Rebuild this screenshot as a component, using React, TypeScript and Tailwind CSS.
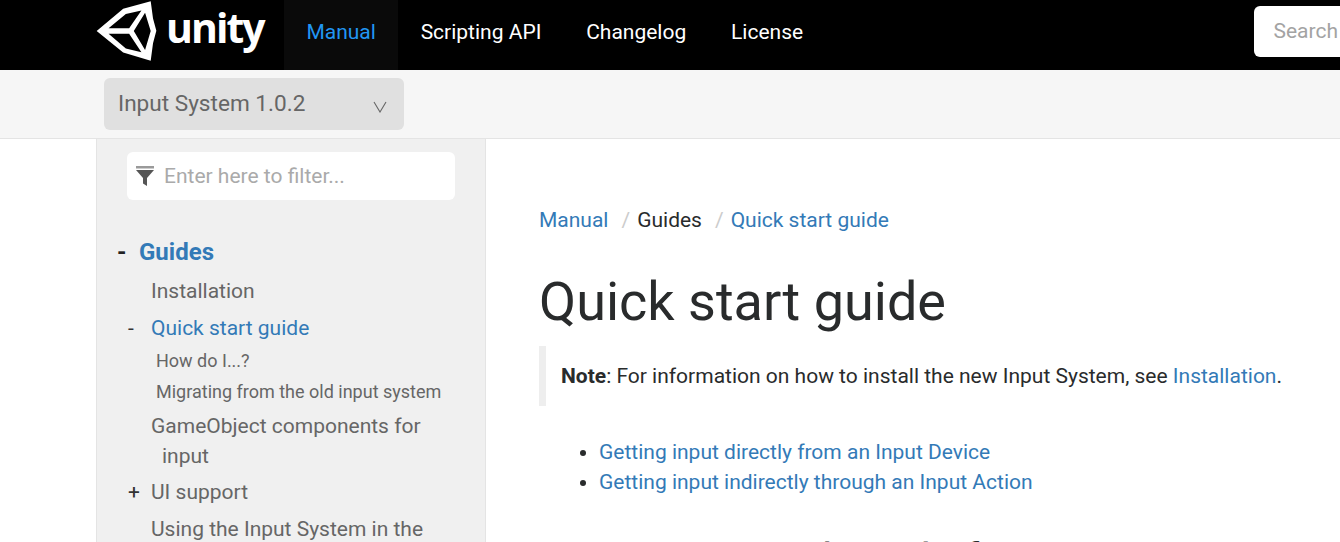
import React from 'react';

const font = "font-['Roboto','Liberation_Sans',sans-serif]";

const UnityMark = () => (
  <svg viewBox="18 0 187 186" className="w-[62px] h-[62px] shrink-0 mb-[8px]">
    <path
      fill="#fff"
      fillRule="evenodd"
      d="M20 93 L100 26 L183 3 L190 55 L200 92 L190 130 L183 183 L100 158 Z
         M56 85 L118 85 L155 31 L108 42 Z
         M56 101 L118 101 L155 157 L108 146 Z
         M166 38 L132 93 L166 150 L183 93 Z"
    />
  </svg>
);

const NavLink = ({ label, active }: { label: string; active?: boolean }) => (
  <a className={active ? 'h-full flex items-center px-[22.4px] pb-[5px] whitespace-nowrap bg-[#0a0a0a] text-[#2196f3]' : 'h-full flex items-center px-[22.4px] pb-[5px] whitespace-nowrap text-white'}>
    {label}
  </a>
);

export default function App() {
  return (
    <div className={`${font} w-[1340px] h-[542px] overflow-hidden bg-white text-[#292b2c]`}>
      <header className="h-[70px] bg-black flex overflow-hidden">
        <div className="w-[284px] pl-[96px] flex items-center gap-[8px] shrink-0">
          <UnityMark />
          <span className="text-white font-bold text-[41px] tracking-[-2px] leading-none mb-[16px] font-['Open_Sans',sans-serif]">unity</span>
        </div>
        <nav className="flex text-[21px] h-full">
          <NavLink label="Manual" active />
          <NavLink label="Scripting API" />
          <NavLink label="Changelog" />
          <NavLink label="License" />
        </nav>
        <div className="ml-[428px] mt-[6px] w-[200px] h-[51px] shrink-0 bg-white rounded-md pl-[20px] flex items-center text-[21px] text-[#a3a3a3]">
          Search
        </div>
      </header>

      <div className="h-[69px] bg-[#f6f6f6] border-b border-[#e4e4e4] pl-[104px] pt-[8px]">
        <div className="w-[300px] h-[52px] bg-[#e0e0e0] rounded-md pl-[14px] pr-[17px] flex items-center justify-between text-[#666] text-[22.6px]">
          <span>Input System 1.0.2</span>
          <svg viewBox="0 0 14 12" className="w-[14px] h-[12px] mt-[5px]" fill="none" stroke="#666" strokeWidth="1.1">
            <path d="M1 1 L7 11 L13 1" />
          </svg>
        </div>
      </div>

      <div className="flex">
        <aside className="ml-[96px] w-[390px] shrink-0 h-[403px] bg-[#f0f0f0] border-x border-[#e4e4e4] overflow-hidden">
          <div className="ml-[30px] mt-[13px] w-[328px] h-[48px] bg-white rounded-md flex items-center pl-[9px] gap-[10px] text-[21px] text-[#aaa]">
            <svg viewBox="0 0 18 22" className="w-[18px] h-[22px]">
              <path d="M0 1 H18 V3.5 H0 Z" fill="#9a9a9a" />
              <path d="M0 5 H18 L11 13 V21 L7 18.5 V13 Z" fill="#555" />
            </svg>
            <span className="pt-[2px]">Enter here to filter...</span>
          </div>

          <div className="mt-[37px] text-[#666]">
            <div className="flex items-center h-[30px] text-[24px] font-bold">
              <span className="w-[42px] pl-[20px] text-[#222]">-</span>
              <a className="text-[#337ab7]">Guides</a>
            </div>
            <div className="mt-[9px] ml-[54px] h-[30px] text-[21px] leading-[30px]">Installation</div>
            <div className="mt-[7px] h-[30px] text-[21px] leading-[30px] flex">
              <span className="w-[54px] pl-[31px] text-[#333]">-</span>
              <a className="text-[#337ab7]">Quick start guide</a>
            </div>
            <div className="mt-[2px] ml-[59px] text-[18px] leading-[31px]">How do I...?</div>
            <div className="ml-[59px] text-[18px] leading-[31px]">Migrating from the old input system</div>
            <div className="mt-[4px] ml-[54px] text-[21px] leading-[30px]">GameObject components for</div>
            <div className="ml-[65px] text-[21px] leading-[30px]">input</div>
            <div className="mt-[6px] h-[30px] text-[21px] leading-[30px] flex">
              <span className="w-[54px] pl-[31px] text-[#333]">+</span>
              <span>UI support</span>
            </div>
            <div className="mt-[7px] ml-[54px] text-[21px] leading-[30px]">Using the Input System in the</div>
          </div>
        </aside>

        <main className="pl-[53px] min-w-0 h-[403px] overflow-hidden">
          <nav className="mt-[67px] h-[30px] flex items-center text-[21px]">
            <a className="text-[#337ab7]">Manual</a>
            <span className="ml-[13px] mr-[7px] text-[#ccc]">/</span>
            <span>Guides</span>
            <span className="ml-[13px] mr-[7px] text-[#ccc]">/</span>
            <a className="text-[#337ab7]">Quick start guide</a>
          </nav>
          <h1 className="mt-[35px] text-[54px] leading-[62px] font-normal whitespace-nowrap">Quick start guide</h1>
          <blockquote className="mt-[13px] h-[60px] w-[760px] border-l-[7px] border-[#eee] pl-[15px] pt-[2px] flex items-center text-[21px] whitespace-nowrap">
            <span><strong className="font-bold">Note</strong>: For information on how to install the new Input System, see <a className="text-[#337ab7]">Installation</a>.</span>
          </blockquote>
          <ul className="mt-[31px] pl-[60px] list-disc text-[21px] leading-[30px]">
            <li><a className="text-[#337ab7]">Getting input directly from an Input Device</a></li>
            <li><a className="text-[#337ab7]">Getting input indirectly through an Input Action</a></li>
          </ul>
          <h2 className="mt-[38px] text-[45px] leading-[50px] font-normal whitespace-nowrap">Getting input directly from an Input Device</h2>
        </main>
      </div>
    </div>
  );
}
